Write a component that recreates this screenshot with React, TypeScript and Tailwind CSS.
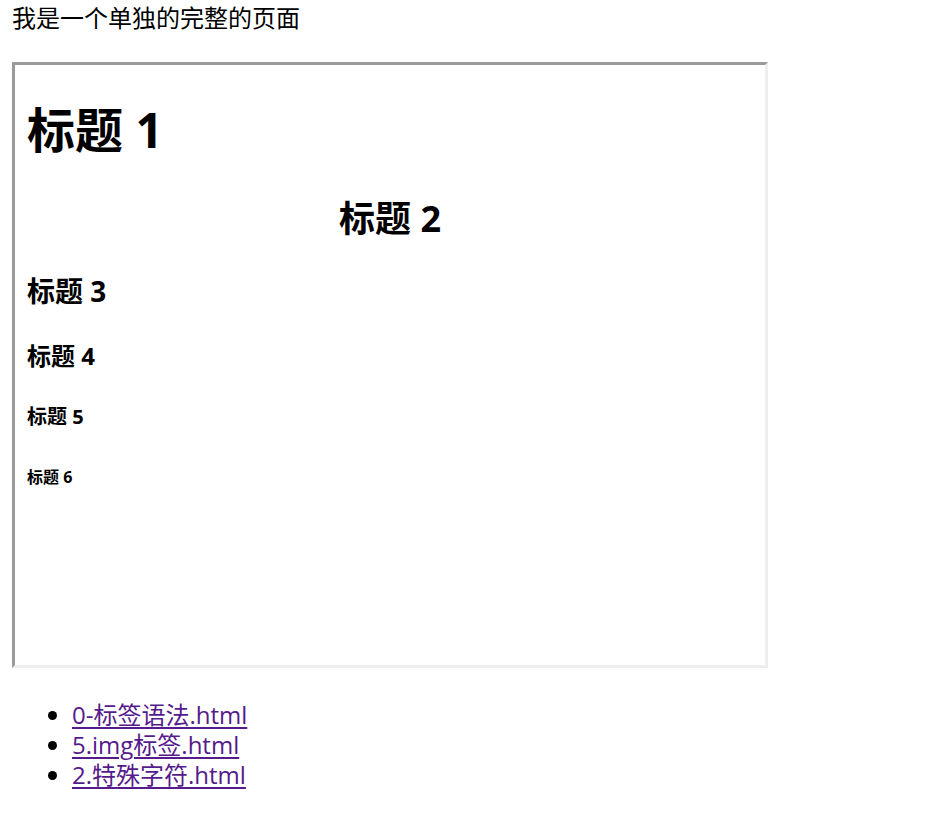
// A single standalone page: an intro line, an "iframe" with six headings, and a list of links.
const FONT = "font-['Open_Sans','Noto_Sans_CJK_SC',sans-serif]";

const links = ["0-标签语法.html", "5.img标签.html", "2.特殊字符.html"];

function FramedPage() {
  return (
    <div className="mt-[28px] w-[756px] h-[606px] border-[3px] border-t-[#9a9a9a] border-l-[#9a9a9a] border-r-[#eeeeee] border-b-[#eeeeee] bg-white px-[12px]">
      <h1 className="mt-[33px] text-[48px] leading-[64px] font-bold">标题 1</h1>
      <h2 className="mt-[33px] text-[36px] leading-[48px] font-bold text-center">标题 2</h2>
      <h3 className="mt-[30px] text-[28px] leading-[36px] font-bold">标题 3</h3>
      <h4 className="mt-[31px] text-[24px] leading-[32px] font-bold">标题 4</h4>
      <h5 className="mt-[32px] text-[20px] leading-[26px] font-bold">标题 5</h5>
      <h6 className="mt-[37px] text-[16px] leading-[21px] font-bold">标题 6</h6>
    </div>
  );
}

export default function App() {
  return (
    <div className={`${FONT} min-h-screen bg-white text-black px-[12px] pt-[2px]`}>
      <div className="text-[24px] leading-[32px]">我是一个单独的完整的页面</div>
      <FramedPage />
      <ul className="mt-[32px] list-disc pl-[60px] text-[24px] leading-[30px]">
        {links.map((l) => (
          <li key={l}>
            <a href="#" className="text-[#551a8b] underline decoration-[2px] underline-offset-[3px]">
              {l}
            </a>
          </li>
        ))}
      </ul>
    </div>
  );
}
